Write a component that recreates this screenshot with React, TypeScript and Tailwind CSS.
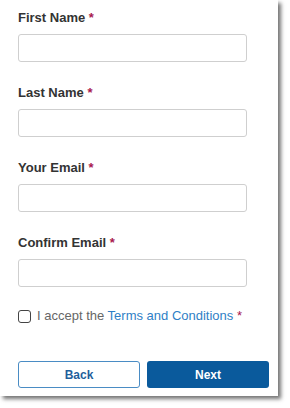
import React, { useState } from "react";

const font = { fontFamily: '"Liberation Sans", Arial, sans-serif' };

interface FieldProps {
  label: string;
  type?: string;
}

const Field: React.FC<FieldProps> = ({ label, type = "text" }) => (
  <div className="mb-[23px]">
    <label className="block text-[13px] leading-[16px] font-bold text-[#333333] mb-2">
      {label} <span className="text-[#a8184f]">*</span>
    </label>
    <input
      type={type}
      className="block w-[229px] h-[28px] border border-[#cfcfcf] rounded-[3px] bg-white px-2 text-[13px] outline-none"
    />
  </div>
);

const App: React.FC = () => {
  const [accepted, setAccepted] = useState(false);

  return (
    <div className="w-[290px] h-[408px] bg-white overflow-hidden" style={font}>
      <div className="w-[278px] h-[396px] bg-white shadow-[3px_3px_4px_rgba(0,0,0,0.55)] pl-[18px] pt-[10px]">
        <Field label="First Name" />
        <Field label="Last Name" />
        <Field label="Your Email" type="email" />
        <Field label="Confirm Email" type="email" />

        <div className="flex items-center mt-[-2px] h-[16px]">
          <input
            type="checkbox"
            checked={accepted}
            onChange={(e) => setAccepted(e.target.checked)}
            className="appearance-none w-[13px] h-[13px] border border-[#444444] rounded-[3px] bg-white m-0"
          />
          <span className="ml-[6px] text-[13px] leading-[16px] text-[#666666]">
            I accept the <span className="text-[#2f7fc6]">Terms and Conditions</span>{" "}
            <span className="text-[#a8184f]">*</span>
          </span>
        </div>

        <div className="flex gap-[7px] mt-[37px]">
          <button className="w-[122px] h-[27px] border border-[#4a8cc4] rounded-[3px] bg-white text-[12px] font-bold text-[#1f5f9c]">
            Back
          </button>
          <button className="w-[122px] h-[27px] rounded-[3px] bg-[#0a5a9c] text-[12px] font-bold text-white">
            Next
          </button>
        </div>
      </div>
    </div>
  );
};

export default App;
